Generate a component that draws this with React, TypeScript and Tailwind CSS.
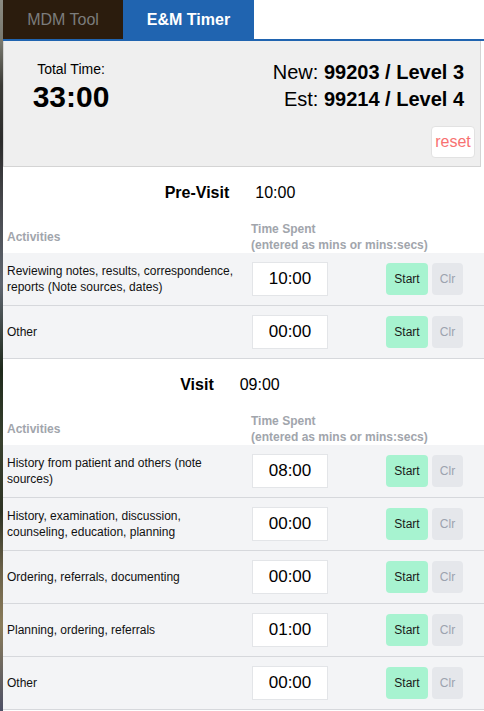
import React from "react";

type Row = { label: string; value: string };

const preVisit: Row[] = [
  { label: "Reviewing notes, results, correspondence, reports (Note sources, dates)", value: "10:00" },
  { label: "Other", value: "00:00" },
];

const visit: Row[] = [
  { label: "History from patient and others (note sources)", value: "08:00" },
  { label: "History, examination, discussion, counseling, education, planning", value: "00:00" },
  { label: "Ordering, referrals, documenting", value: "00:00" },
  { label: "Planning, ordering, referrals", value: "01:00" },
  { label: "Other", value: "00:00" },
];

function Section({ title, total, rows }: { title: string; total: string; rows: Row[] }) {
  return (
    <div>
      <div className="flex justify-center gap-[26px] pr-[27px] pt-[16px] text-[16px] leading-[20px] text-black">
        <span className="font-bold">{title}</span>
        <span>{total}</span>
      </div>
      <div className="mt-[18px] grid grid-cols-[245px_134px_1fr] pl-[4px] text-[12px] font-bold leading-[16px] text-[#a1a5ac]">
        <div className="flex items-center">Activities</div>
        <div className="-ml-[1px]">
          <div>Time Spent</div>
          <div className="whitespace-nowrap">(entered as mins or mins:secs)</div>
        </div>
        <div />
      </div>
      {rows.map((r, i) => (
        <div
          key={i}
          className="grid h-[53px] grid-cols-[245px_134px_1fr] items-center border-b border-[#d6d8dc] bg-[#f3f4f6] pl-[4px]"
        >
          <div className="pr-[14px] text-[12px] leading-[16px] text-[#111]">{r.label}</div>
          <div>
            <input
              readOnly
              defaultValue={r.value}
              className="h-[34px] w-[76px] border border-[#e3e5e8] bg-white text-center text-[17px] text-black outline-none"
            />
          </div>
          <div className="flex items-center gap-[4px]">
            <button className="h-[32px] w-[42px] rounded-[4px] bg-[#a7f3d0] text-[12px] text-[#1a1a1a]">
              Start
            </button>
            <button className="h-[32px] w-[31px] rounded-[4px] bg-[#e5e7eb] text-[12px] text-[#9ca3af]">
              Clr
            </button>
          </div>
        </div>
      ))}
    </div>
  );
}

export default function App() {
  return (
    <div
      className="flex h-[711px] overflow-hidden bg-white"
      style={{ fontFamily: '"Liberation Sans", Arial, sans-serif' }}
    >
      <div className="w-[3px] shrink-0 bg-[linear-gradient(to_bottom,#8b8b82_0%,#77776d_6%,#3a3a36_12%,#2b2b2b_20%,#45464a_28%,#5f6670_40%,#1f2a1c_52%,#39412e_62%,#2d3324_72%,#6a6048_80%,#8a7c5a_88%,#4d5066_100%)]" />
      <div className="min-w-0 flex-1">
        <div className="flex h-[41px] border-b-2 border-[#2064b0]">
          <div className="flex w-[120px] items-center justify-center bg-[#2b1c0d] text-[16px] text-[#7c7c7c]">
            MDM Tool
          </div>
          <div className="flex w-[131px] items-center justify-center bg-[#2064b0] text-[16px] font-bold text-white">
            E&amp;M Timer
          </div>
        </div>
        <div className="mr-[3px] border-x border-b border-[#d4d4d4] bg-[#efefef] pt-[18px] pb-[8px]">
          <div className="flex items-start justify-between pl-[19px] pr-[16px]">
            <div className="mt-[2px] flex w-[96px] flex-col items-center text-black">
              <div className="text-[14px] leading-[16px]">Total Time:</div>
              <div className="mt-[3px] text-[30px] font-bold leading-[34px]">33:00</div>
            </div>
            <div className="flex flex-col items-end text-[20px] leading-[27px] text-black">
              <div>
                New: <span className="font-bold">99203 / Level 3</span>
              </div>
              <div>
                Est: <span className="font-bold">99214 / Level 4</span>
              </div>
            </div>
          </div>
          <div className="mt-[12px] flex justify-end pr-[5px]">
            <button className="h-[32px] w-[44px] rounded-[4px] border border-[#e2e2e2] bg-white text-[16px] text-[#f87171]">
              reset
            </button>
          </div>
        </div>
        <Section title="Pre-Visit" total="10:00" rows={preVisit} />
        <Section title="Visit" total="09:00" rows={visit} />
      </div>
    </div>
  );
}
